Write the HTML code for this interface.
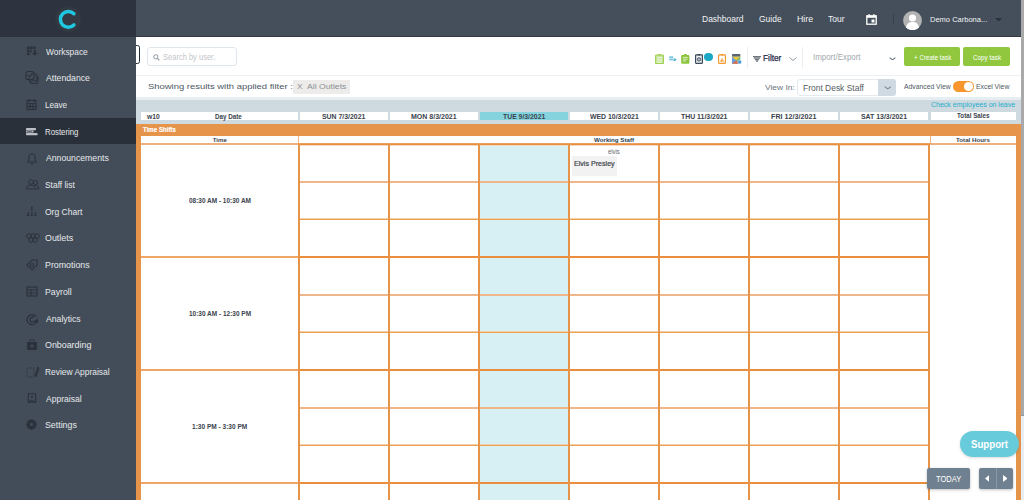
<!DOCTYPE html>
<html><head><meta charset="utf-8">
<style>
*{box-sizing:border-box;margin:0;padding:0}
html,body{width:1024px;height:500px;overflow:hidden;background:#fff;font-family:"Liberation Sans",sans-serif}
.a{position:absolute}
.t{position:absolute;white-space:nowrap;line-height:1;transform-origin:0 0}
</style></head><body>

<div class="a" style="left:128px;top:45px;width:11.6px;height:19px;border:1.7px solid #22303c;border-radius:2.5px"></div>
<div class="a" style="left:0;top:0;width:136px;height:500px;background:#434d59"></div>
<div class="a" style="left:0;top:0;width:136px;height:37px;background:#2e343f"></div>
<svg class="a" style="left:54px;top:5px" width="28" height="28" viewBox="0 0 28 28">
<circle cx="14.2" cy="14" r="13" fill="#313842"/>
<circle cx="14.2" cy="14" r="12.2" fill="#333a44"/>
<path d="M19.9 8.76 A7.9 7.9 0 1 0 19.9 19.94" fill="none" stroke="#1ec8e1" stroke-width="3.5" stroke-linecap="round"/>
</svg>
<svg class="a" style="left:26px;top:46.00px" width="14" height="13" viewBox="0 0 14 13"><g fill="#2b323c"><rect x="1" y="0.5" width="2.6" height="2.6"/><rect x="4.2" y="0.5" width="2.6" height="2.6"/><rect x="7.4" y="0.5" width="2.2" height="2.6"/><rect x="1" y="3.7" width="2.6" height="2.6"/><rect x="1" y="6.9" width="2.6" height="2.2"/><rect x="4.2" y="3.7" width="1.5" height="2.6"/><path d="M7.8 4 v3 h-2 l3 2.6 l3 -2.6 h-2 v-3z"/></g></svg>
<div class="t" style="left:45.80px;top:47px;font-size:9.42px;color:#e6e9ec;transform:scaleX(0.890);">Workspace</div>
<svg class="a" style="left:25px;top:71.48px" width="14" height="13" viewBox="0 0 14 13"><g fill="none" stroke="#2b323c" stroke-width="1.1"><path d="M1 2.5 a2 2 0 0 1 2-2 h4 a2 2 0 0 1 2 2 v4 a2 2 0 0 1 -2 2 h-4 a2 2 0 0 1 -2 -2z"/><path d="M9 3 h1 a2 2 0 0 1 2 2 v3 a2 2 0 0 1 -2 2 h-4 a2 2 0 0 1 -2 -2 v-0.5"/><path d="M11.5 5.5 a2 2 0 0 1 1.5 2 v3 a2 2 0 0 1 -2 2 h-4 a2 2 0 0 1 -2 -2 v-0.5"/><path d="M3 4 l1.6 1.8 l3.2 -4"/></g></svg>
<div class="t" style="left:45.80px;top:73px;font-size:9.42px;color:#e6e9ec;transform:scaleX(0.923);">Attendance</div>
<svg class="a" style="left:26px;top:99.36px" width="14" height="13" viewBox="0 0 14 13"><g fill="none" stroke="#2b323c" stroke-width="1.2"><rect x="1" y="1.5" width="9" height="9"/><path d="M1 4.5h9M4 4.5v6M7 4.5v6M1 7.5h9M3 0v3M8 0v3"/></g></svg>
<div class="t" style="left:45.15px;top:100px;font-size:9.42px;color:#e6e9ec;transform:scaleX(0.863);">Leave</div>
<div class="a" style="left:0;top:117.54px;width:136px;height:26.68px;background:#2a303a"></div>
<svg class="a" style="left:26px;top:126.04px" width="14" height="13" viewBox="0 0 14 13"><g fill="#bcc0c6"><rect x="0" y="1.9" width="10" height="2.3" rx="0.8"/><rect x="0" y="4.5" width="7.5" height="2.1" rx="0.5"/><rect x="0" y="6.9" width="11.6" height="2.3" rx="0.8"/></g><rect x="1" y="5.2" width="5" height="0.7" fill="#4a5058"/></svg>
<div class="t" style="left:45.17px;top:127px;font-size:9.42px;color:#e6e9ec;transform:scaleX(0.830);">Rostering</div>
<svg class="a" style="left:26px;top:152.72px" width="14" height="13" viewBox="0 0 14 13"><g fill="none" stroke="#2b323c" stroke-width="1.1"><path d="M2 9 C3 8 3 6 3 4.5 C3 2 4.5 0.8 6 0.8 C7.5 0.8 9 2 9 4.5 C9 6 9 8 10 9 Z"/><path d="M4.8 10.2 a1.3 1.3 0 0 0 2.4 0"/></g></svg>
<div class="t" style="left:45.80px;top:153px;font-size:9.42px;color:#e6e9ec;transform:scaleX(0.923);">Announcements</div>
<svg class="a" style="left:26px;top:179.40px" width="14" height="13" viewBox="0 0 14 13"><g fill="none" stroke="#2b323c" stroke-width="1"><circle cx="5" cy="3" r="2.3"/><path d="M0.8 10 c0-3 1.5-4 4.2-4 s4.2 1 4.2 4 z"/><circle cx="9.5" cy="3.5" r="2"/><path d="M9 6.3 c2.5 0 3.8 1 3.8 3.7 h-3"/></g></svg>
<div class="t" style="left:45.46px;top:180px;font-size:9.42px;color:#e6e9ec;transform:scaleX(0.895);">Staff list</div>
<svg class="a" style="left:26px;top:206.08px" width="14" height="13" viewBox="0 0 14 13"><g fill="#2b323c"><circle cx="5.8" cy="1.4" r="0.9"/><path d="M4.5 4.0 q0 -1.8 1.3 -1.8 q1.3 0 1.3 1.8z"/><circle cx="2" cy="7.4" r="0.9"/><path d="M0.7 10.0 q0 -1.8 1.3 -1.8 q1.3 0 1.3 1.8z"/><circle cx="5.8" cy="7.4" r="0.9"/><path d="M4.5 10.0 q0 -1.8 1.3 -1.8 q1.3 0 1.3 1.8z"/><circle cx="9.4" cy="7.4" r="0.9"/><path d="M8.1 10.0 q0 -1.8 1.3 -1.8 q1.3 0 1.3 1.8z"/></g><path d="M2 5.6 h7.4 M5.8 4.2 v1.4" stroke="#2b323c" stroke-width="0.5" opacity="0.5"/></svg>
<div class="t" style="left:45.46px;top:207px;font-size:9.42px;color:#e6e9ec;transform:scaleX(0.905);">Org Chart</div>
<svg class="a" style="left:26px;top:232.76px" width="14" height="13" viewBox="0 0 14 13"><g fill="none" stroke="#2b323c" stroke-width="1"><circle cx="3" cy="3" r="2.3"/><circle cx="7" cy="3" r="2.3"/><circle cx="11" cy="3" r="2.3"/><circle cx="5" cy="7" r="2.3"/><circle cx="9" cy="7" r="2.3"/></g></svg>
<div class="t" style="left:45.44px;top:233px;font-size:9.42px;color:#e6e9ec;transform:scaleX(0.946);">Outlets</div>
<svg class="a" style="left:26px;top:259.44px" width="14" height="13" viewBox="0 0 14 13"><g fill="none" stroke="#2b323c" stroke-width="1.1"><path d="M1 6 L6 1 L11 1 L11 6 L6 11 Z"/><circle cx="6" cy="6" r="1.5"/></g></svg>
<div class="t" style="left:45.09px;top:260px;font-size:9.42px;color:#e6e9ec;transform:scaleX(0.938);">Promotions</div>
<svg class="a" style="left:26px;top:286.12px" width="14" height="13" viewBox="0 0 14 13"><g fill="none" stroke="#2b323c" stroke-width="1.1"><rect x="1" y="1" width="10" height="9"/><path d="M1 4h10M1 7h10M5 4v6"/></g></svg>
<div class="t" style="left:45.10px;top:287px;font-size:9.42px;color:#e6e9ec;transform:scaleX(0.929);">Payroll</div>
<svg class="a" style="left:26px;top:312.80px" width="14" height="13" viewBox="0 0 14 13"><g fill="none" stroke="#2b323c" stroke-width="1.3"><path d="M10 3.5 A5 5 0 1 0 11 7.5"/><path d="M8 4.5 A2.5 2.5 0 1 0 9 7"/></g><path d="M8 9 L12 5 L12 10 Z" fill="#2b323c"/></svg>
<div class="t" style="left:45.80px;top:314px;font-size:9.42px;color:#e6e9ec;transform:scaleX(0.922);">Analytics</div>
<svg class="a" style="left:26px;top:339.48px" width="14" height="13" viewBox="0 0 14 13"><g fill="#2b323c"><rect x="1" y="3" width="10" height="8" rx="1"/><rect x="4" y="1" width="4" height="2.5" fill="none" stroke="#2b323c"/></g><path d="M6 5 v4M4 7h4" stroke="#434d59" stroke-width="1"/></svg>
<div class="t" style="left:45.45px;top:340px;font-size:9.42px;color:#e6e9ec;transform:scaleX(0.942);">Onboarding</div>
<svg class="a" style="left:26px;top:366.16px" width="14" height="13" viewBox="0 0 14 13"><g fill="none" stroke="#2b323c" stroke-width="1"><rect x="1" y="2" width="7" height="9" stroke-dasharray="1 1"/><path d="M9 10 L12 1 L13 2 L10 11 Z" fill="#2b323c"/></g></svg>
<div class="t" style="left:45.13px;top:367px;font-size:9.42px;color:#e6e9ec;transform:scaleX(0.894);">Review Appraisal</div>
<svg class="a" style="left:26px;top:392.84px" width="14" height="13" viewBox="0 0 14 13"><g fill="none" stroke="#2b323c" stroke-width="1.1"><path d="M2.3 0.8 h7.4 v8.4 h-7.4 z"/><path d="M2.3 9.8 l3 -2.6 l4.4 2" /></g><circle cx="6" cy="3.8" r="1.1" fill="#2b323c"/></svg>
<div class="t" style="left:45.80px;top:394px;font-size:9.42px;color:#e6e9ec;transform:scaleX(0.910);">Appraisal</div>
<svg class="a" style="left:26px;top:418.62px" width="14" height="13" viewBox="0 0 14 13"><path d="M10.67 4.34 L10.67 6.66 L9.01 7.20 L9.18 6.78 L9.98 8.34 L8.34 9.98 L6.78 9.18 L7.20 9.01 L6.66 10.67 L4.34 10.67 L3.80 9.01 L4.22 9.18 L2.66 9.98 L1.02 8.34 L1.82 6.78 L1.99 7.20 L0.33 6.66 L0.33 4.34 L1.99 3.80 L1.82 4.22 L1.02 2.66 L2.66 1.02 L4.22 1.82 L3.80 1.99 L4.34 0.33 L6.66 0.33 L7.20 1.99 L6.78 1.82 L8.34 1.02 L9.98 2.66 L9.18 4.22 L9.01 3.80Z" fill="#2b323c"/><circle cx="5.5" cy="5.5" r="1.4" fill="#434d59"/></svg>
<div class="t" style="left:45.45px;top:420px;font-size:9.42px;color:#e6e9ec;transform:scaleX(0.935);">Settings</div>
<div class="a" style="left:136px;top:0;width:885px;height:37px;background:#444f5b"></div>
<div class="a" style="left:136px;top:35.8px;width:885px;height:1.2px;background:#343b45"></div>
<div class="t" style="left:701.92px;top:15px;font-size:8.84px;color:#f2f3f4;transform:scaleX(0.961);">Dashboard</div>
<div class="t" style="left:758.68px;top:15px;font-size:8.84px;color:#f2f3f4;transform:scaleX(0.959);">Guide</div>
<div class="t" style="left:796.80px;top:15px;font-size:8.84px;color:#f2f3f4;transform:scaleX(0.995);">Hire</div>
<div class="t" style="left:828.43px;top:15px;font-size:8.84px;color:#f2f3f4;transform:scaleX(0.958);">Tour</div>
<svg class="a" style="left:866px;top:14px" width="11" height="11" viewBox="0 0 11 11"><rect x="0.8" y="1.8" width="9.4" height="8.4" fill="none" stroke="#fff" stroke-width="1.3"/><rect x="0.8" y="1.8" width="9.4" height="2" fill="#fff"/><rect x="5.5" y="5.5" width="3" height="3" fill="#fff"/><rect x="2.5" y="0" width="1.2" height="2.5" fill="#fff"/><rect x="7.3" y="0" width="1.2" height="2.5" fill="#fff"/></svg>
<div class="a" style="left:893px;top:14.4px;width:1px;height:10px;background:#38404a"></div>
<svg class="a" style="left:903.2px;top:10.5px" width="19" height="19" viewBox="0 0 19 19"><circle cx="9.5" cy="9.5" r="9.4" fill="#b3b3b3"/><circle cx="9.5" cy="7" r="3.6" fill="#fff"/><path d="M3 16.5 C4 12 6.5 11 9.5 11 C12.5 11 15 12 16 16.5 C14 18.4 12 19 9.5 19 C7 19 5 18.4 3 16.5Z" fill="#fff"/></svg>
<div class="t" style="left:930.00px;top:16px;font-size:7.39px;color:#f2f3f4;transform:scaleX(1.019);">Demo Carbona...</div>
<svg class="a" style="left:994.9px;top:18.2px" width="7.4" height="3.5" viewBox="0 0 7.4 3.5"><path d="M0 0h7.4l-3.7 3.5z" fill="#2c323b"/></svg>
<div class="a" style="left:1021px;top:0;width:3px;height:415px;background:#a9a9a9"></div>
<div class="a" style="left:1021px;top:415px;width:3px;height:85px;background:#e9eef2"></div>
<div class="a" style="left:1021px;top:415px;width:3px;height:1px;background:#8a98a6"></div>
<div class="a" style="left:146.5px;top:47.1px;width:90.8px;height:18.9px;border:1px solid #dfe6eb;border-radius:3px"></div>
<svg class="a" style="left:153px;top:54px" width="7" height="7" viewBox="0 0 7 7"><circle cx="2.8" cy="2.8" r="2.1" fill="none" stroke="#8a949d" stroke-width="0.95"/><path d="M4.3 4.3 L6.4 6.4" stroke="#8a949d" stroke-width="1.1"/></svg>
<div class="t" style="left:163.10px;top:53px;font-size:8.84px;color:#c2c6ca;transform:scaleX(0.852);">Search by user.</div>
<div class="a" style="left:136px;top:75px;width:885px;height:1px;background:#eef1f4"></div>
<svg class="a" style="left:654.5px;top:54px" width="9" height="10" viewBox="0 0 9 10"><rect x="0.6" y="1" width="7.8" height="8.6" rx="0.6" fill="#c9e69e" stroke="#9fd14f" stroke-width="1.1"/><rect x="3.2" y="0" width="2.6" height="1.6" fill="#9fd14f"/><path d="M2 3.3h5M2 5.1h5M2 6.9h5M2 8.5h5" stroke="#f2f9e8" stroke-width="0.7"/></svg>
<svg class="a" style="left:668.5px;top:55.8px" width="8" height="6" viewBox="0 0 8 6"><rect x="0.2" y="0.3" width="4" height="1.8" fill="#7cc7e0"/><rect x="0.2" y="2.6" width="4" height="1.8" fill="#7cc7e0"/><path d="M4.6 2.6h1.5l1.6 1.2-1.6 1.3h-1.5z" fill="#4fb4d6"/></svg>
<svg class="a" style="left:681.2px;top:54px" width="9" height="10" viewBox="0 0 9 10"><rect x="0.2" y="0.9" width="8.2" height="8.8" rx="1" fill="#8cc63f"/><rect x="3" y="0" width="2.6" height="1.6" fill="#8cc63f"/><path d="M2 3.4h4.6M2 5.2h4.6M2 7h3" stroke="#e3f1cf" stroke-width="0.9"/></svg>
<svg class="a" style="left:695px;top:54.4px" width="8" height="10" viewBox="0 0 8 10"><rect x="0.6" y="0.9" width="6.8" height="8.4" rx="0.5" fill="#eef0f2" stroke="#3b4b5b" stroke-width="1.2"/><rect x="2.7" y="0" width="2.6" height="1.5" fill="#3b4b5b"/><circle cx="4" cy="5.4" r="1.7" fill="#b9c0c7" stroke="#3b4b5b" stroke-width="0.9"/></svg>
<div class="a" style="left:704.4px;top:52.9px;width:8.3px;height:8px;border-radius:50%;background:#1ba8c4"></div>
<svg class="a" style="left:717.9px;top:54.4px" width="8" height="10" viewBox="0 0 8 10"><rect x="0.6" y="0.9" width="6.8" height="8.4" rx="0.5" fill="#fff" stroke="#f39a30" stroke-width="1.2"/><rect x="2.7" y="0" width="2.6" height="1.5" fill="#f39a30"/><path d="M4 3.5 L6 7.8 H2 Z" fill="#f39a30"/><path d="M4 3.5 v4.3" stroke="#fff" stroke-width="0.4"/></svg>
<svg class="a" style="left:731.9px;top:53.7px" width="10" height="10" viewBox="0 0 10 10"><rect x="0" y="0" width="8.3" height="2.8" rx="0.4" fill="#5d6670"/><rect x="0" y="2.8" width="8.3" height="7" fill="#6bb36b"/><path d="M0 2.8 L4.2 6.5 L0 9.8z" fill="#6a9ce0"/><path d="M0 2.8 H8.3 L4.2 6.5z" fill="#e8c64a"/><path d="M0 9.8 L4.2 6.5 L8.3 9.8z" fill="#e06a5a"/><circle cx="7.7" cy="8" r="1.9" fill="#3d96dd" stroke="#fff" stroke-width="0.5"/></svg>
<div class="a" style="left:747.2px;top:47px;width:1px;height:21px;background:#eceff2"></div>
<svg class="a" style="left:752.9px;top:55.6px" width="8" height="6" viewBox="0 0 8 6"><path d="M0 0.6h8M0.9 2.1h6.2M1.9 3.6h4.2M2.9 5.1h2.2" stroke="#70787f" stroke-width="1.1"/></svg>
<div class="t" style="left:763.14px;top:54px;font-size:8.55px;color:#1f2a44;transform:scaleX(0.967);-webkit-text-stroke:0.25px #1f2a44;">Filter</div>
<svg class="a" style="left:789px;top:56.8px" width="8" height="4" viewBox="0 0 8 4"><path d="M0.5 0.5 L4 3.5 L7.5 0.5" fill="none" stroke="#8e99a4" stroke-width="1"/></svg>
<div class="a" style="left:802.2px;top:47px;width:1px;height:21px;background:#eceff2"></div>
<div class="t" style="left:813.19px;top:53px;font-size:8.55px;color:#a3a9ae;transform:scaleX(0.927);">Import/Export</div>
<svg class="a" style="left:888.5px;top:56.8px" width="7" height="3.5" viewBox="0 0 7 3.5"><path d="M0.6 0.6 L3.5 2.9 L6.4 0.6" fill="none" stroke="#6c7a88" stroke-width="1.2"/></svg>
<div class="a" style="left:903.9px;top:47.3px;width:56.6px;height:18.6px;background:#90c73f;border-radius:2px"></div>
<div class="t" style="left:913.65px;top:55px;font-size:6.96px;color:#fff;transform:scaleX(0.897);">+ Create task</div>
<div class="a" style="left:963.1px;top:47.3px;width:46.9px;height:18.6px;background:#90c73f;border-radius:2px"></div>
<div class="t" style="left:972.58px;top:55px;font-size:6.96px;color:#fff;transform:scaleX(0.910);">Copy task</div>
<div class="t" style="left:147.52px;top:83px;font-size:8.12px;color:#4d5863;transform:scaleX(1.164);">Showing results with applied filter :</div>
<div class="a" style="left:293.3px;top:79.6px;width:56.9px;height:14.1px;background:#eeecea"></div>
<div class="t" style="left:297.23px;top:83px;font-size:7.97px;color:#8a9096;transform:scaleX(1.055);">X</div>
<div class="t" style="left:307.00px;top:83px;font-size:7.97px;color:#8a9096;transform:scaleX(1.084);">All Outlets</div>
<div class="t" style="left:764.90px;top:84px;font-size:8.12px;color:#6b7580;transform:scaleX(1.039);">View In:</div>
<div class="a" style="left:797.3px;top:78.6px;width:98.9px;height:17.9px;background:#fff;border:1px solid #e6eaee;border-radius:3px"></div>
<div class="a" style="left:877.6px;top:78.6px;width:18.6px;height:17.9px;background:#d0dae2;border-radius:0 3px 3px 0"></div>
<svg class="a" style="left:883.5px;top:86.3px" width="7.5" height="3.5" viewBox="0 0 7.5 3.5"><path d="M0.6 0.6 L3.75 2.9 L6.9 0.6" fill="none" stroke="#7a8794" stroke-width="1.1"/></svg>
<div class="t" style="left:803.32px;top:84px;font-size:8.99px;color:#555c63;transform:scaleX(0.941);">Front Desk Staff</div>
<div class="t" style="left:903.80px;top:84px;font-size:6.81px;color:#4d5863;transform:scaleX(0.998);">Advanced View</div>
<div class="a" style="left:952.8px;top:81.3px;width:21.3px;height:10.9px;background:#f7962f;border-radius:6px"></div>
<div class="a" style="left:963.6px;top:82.1px;width:9.6px;height:9.3px;background:#fff;border-radius:50%"></div>
<div class="t" style="left:975.85px;top:84px;font-size:6.81px;color:#4d5863;transform:scaleX(1.006);">Excel View</div>
<div class="a" style="left:136px;top:96.5px;width:885px;height:3.3px;background:#e7eef2"></div>
<div class="a" style="left:136px;top:99.5px;width:885px;height:24.5px;background:#cfd9e0"></div>
<div class="t" style="left:931.35px;top:101px;font-size:7.39px;color:#22afcb;transform:scaleX(0.950);">Check employees on leave</div>
<div class="a" style="left:141.3px;top:112px;width:156.7px;height:8px;background:#fff"></div>
<div class="t" style="left:146.77px;top:114px;font-size:6.43px;color:#3a434d;font-weight:bold;transform:scaleX(1.052);">w10</div>
<div class="t" style="left:214.82px;top:114px;font-size:6.86px;color:#3a434d;font-weight:bold;transform:scaleX(0.915);">Day Date</div>
<div class="a" style="left:300px;top:112px;width:88px;height:8px;background:#fff"></div>
<div class="t" style="left:322.36px;top:114px;font-size:6.86px;color:#3a434d;font-weight:bold;transform:scaleX(1.006);">SUN 7/3/2021</div>
<div class="a" style="left:390px;top:112px;width:88px;height:8px;background:#fff"></div>
<div class="t" style="left:411.08px;top:114px;font-size:6.86px;color:#3a434d;font-weight:bold;transform:scaleX(1.023);">MON 8/3/2021</div>
<div class="a" style="left:480px;top:112px;width:88px;height:8px;background:#85d3dd"></div>
<div class="t" style="left:502.93px;top:114px;font-size:6.86px;color:#3a434d;font-weight:bold;transform:scaleX(0.998);">TUE 9/3/2021</div>
<div class="a" style="left:570px;top:112px;width:88px;height:8px;background:#fff"></div>
<div class="t" style="left:589.75px;top:114px;font-size:6.86px;color:#3a434d;font-weight:bold;transform:scaleX(1.006);">WED 10/3/2021</div>
<div class="a" style="left:660px;top:112px;width:88px;height:8px;background:#fff"></div>
<div class="t" style="left:680.83px;top:114px;font-size:6.86px;color:#3a434d;font-weight:bold;transform:scaleX(1.007);">THU 11/3/2021</div>
<div class="a" style="left:750px;top:112px;width:88px;height:8px;background:#fff"></div>
<div class="t" style="left:771.17px;top:114px;font-size:6.86px;color:#3a434d;font-weight:bold;transform:scaleX(1.045);">FRI 12/3/2021</div>
<div class="a" style="left:840px;top:112px;width:88px;height:8px;background:#fff"></div>
<div class="t" style="left:861.01px;top:114px;font-size:6.86px;color:#3a434d;font-weight:bold;transform:scaleX(1.009);">SAT 13/3/2021</div>
<div class="a" style="left:931px;top:112px;width:84.7px;height:8px;background:#fff"></div>
<div class="t" style="left:957.24px;top:113px;font-size:6.71px;color:#3a434d;font-weight:bold;transform:scaleX(0.930);">Total Sales</div>
<div class="a" style="left:136px;top:123.6px;width:885px;height:377px;background:#e7944b"></div>
<div class="t" style="left:142.64px;top:127px;font-size:6.57px;color:#fff;font-weight:bold;transform:scaleX(0.934);-webkit-text-stroke:0.15px #fff;">Time Shifts</div>
<div class="a" style="left:141px;top:135.5px;width:875px;height:8px;background:#fff"></div>
<div class="a" style="left:298px;top:135.5px;width:1px;height:8px;background:#f0b47e"></div>
<div class="a" style="left:930px;top:135.5px;width:1px;height:8px;background:#f0b47e"></div>
<div class="t" style="left:212.74px;top:137px;font-size:6.14px;color:#3a434d;font-weight:bold;transform:scaleX(1.000);">Time</div>
<div class="t" style="left:594.00px;top:137px;font-size:6.14px;color:#2c3e50;font-weight:bold;transform:scaleX(1.009);">Working Staff</div>
<div class="t" style="left:956.14px;top:137px;font-size:6.14px;color:#3a434d;font-weight:bold;transform:scaleX(1.012);">Total Hours</div>
<div class="a" style="left:141px;top:145px;width:875px;height:360px;background:#fff"></div>
<div class="a" style="left:141px;top:256px;width:157px;height:1.5px;background:#eea565"></div>
<div class="a" style="left:141px;top:369px;width:157px;height:1.5px;background:#eea565"></div>
<div class="a" style="left:141px;top:482px;width:157px;height:1.5px;background:#eea565"></div>
<div class="t" style="left:188.56px;top:198px;font-size:6.71px;color:#3a434d;font-weight:bold;transform:scaleX(0.963);">08:30 AM - 10:30 AM</div>
<div class="t" style="left:188.81px;top:311px;font-size:6.29px;color:#3a434d;font-weight:bold;transform:scaleX(1.031);">10:30 AM - 12:30 PM</div>
<div class="t" style="left:192.11px;top:424px;font-size:6.29px;color:#3a434d;font-weight:bold;transform:scaleX(1.042);">1:30 PM - 3:30 PM</div>
<div class="a" style="left:480px;top:145px;width:88px;height:360px;background:#d7f0f4"></div>
<div class="a" style="left:298px;top:181px;width:632px;height:2px;background:#efb68a"></div>
<div class="a" style="left:298px;top:218px;width:632px;height:1px;background:#f4cfac"></div>
<div class="a" style="left:298px;top:219px;width:632px;height:1px;background:#eba050"></div>
<div class="a" style="left:298px;top:294px;width:632px;height:2px;background:#efb68a"></div>
<div class="a" style="left:298px;top:331px;width:632px;height:1px;background:#f4cfac"></div>
<div class="a" style="left:298px;top:332px;width:632px;height:1px;background:#eba050"></div>
<div class="a" style="left:298px;top:407px;width:632px;height:2px;background:#efb68a"></div>
<div class="a" style="left:298px;top:444px;width:632px;height:1px;background:#f4cfac"></div>
<div class="a" style="left:298px;top:445px;width:632px;height:1px;background:#eba050"></div>
<div class="a" style="left:298px;top:143px;width:632px;height:1px;background:#eba060"></div>
<div class="a" style="left:298px;top:144px;width:632px;height:1px;background:#e88e3c"></div>
<div class="a" style="left:298px;top:145px;width:632px;height:1px;background:#f6dcc6"></div>
<div class="a" style="left:298px;top:256px;width:632px;height:2px;background:#e88e3c"></div>
<div class="a" style="left:298px;top:369px;width:632px;height:2px;background:#e88e3c"></div>
<div class="a" style="left:298px;top:482px;width:632px;height:2px;background:#e88e3c"></div>
<div class="a" style="left:141px;top:143px;width:157px;height:2px;background:#efb080"></div>
<div class="a" style="left:930px;top:143px;width:86px;height:2px;background:#efb080"></div>
<div class="a" style="left:298px;top:143.5px;width:2px;height:360px;background:#e7944b"></div>
<div class="a" style="left:388px;top:143.5px;width:2px;height:360px;background:#e7944b"></div>
<div class="a" style="left:478px;top:143.5px;width:2px;height:360px;background:#e7944b"></div>
<div class="a" style="left:568px;top:143.5px;width:2px;height:360px;background:#e7944b"></div>
<div class="a" style="left:658px;top:143.5px;width:2px;height:360px;background:#e7944b"></div>
<div class="a" style="left:748px;top:143.5px;width:2px;height:360px;background:#e7944b"></div>
<div class="a" style="left:838px;top:143.5px;width:2px;height:360px;background:#e7944b"></div>
<div class="a" style="left:928px;top:143.5px;width:2px;height:360px;background:#e7944b"></div>
<div class="t" style="left:608.47px;top:148px;font-size:7.25px;color:#606469;transform:scaleX(0.808);">elvis</div>
<div class="a" style="left:572.1px;top:155.5px;width:45px;height:20.2px;background:#f2f2f2"></div>
<div class="t" style="left:574.03px;top:161px;font-size:6.96px;color:#3f444a;transform:scaleX(1.021);-webkit-text-stroke:0.2px #3f444a;">Elvis Presley</div>
<div class="a" style="left:960.2px;top:430.8px;width:58.9px;height:26.6px;background:#68cbdb;border-radius:14px;box-shadow:0 1px 3px rgba(0,0,0,.15)"></div>
<div class="t" style="left:971.21px;top:439px;font-size:11.00px;color:#fff;font-weight:bold;transform:scaleX(0.878);">Support</div>
<div class="a" style="left:926.9px;top:468px;width:42.7px;height:20.8px;background:#6f8090;border-radius:2px;box-shadow:0 1px 3px rgba(0,0,0,.25)"></div>
<div class="t" style="left:935.75px;top:475px;font-size:8.70px;color:#fff;transform:scaleX(0.867);">TODAY</div>
<div class="a" style="left:979px;top:468px;width:34.1px;height:20.8px;background:#6f8090;border-radius:2px;box-shadow:0 1px 3px rgba(0,0,0,.25)"></div>
<div class="a" style="left:995.5px;top:468px;width:1px;height:20.8px;background:#8a98a5"></div>
<svg class="a" style="left:984.9px;top:475.4px" width="4.4" height="7" viewBox="0 0 4.4 7"><path d="M4.4 0 V7 L0 3.5z" fill="#fff"/></svg>
<svg class="a" style="left:1002.5px;top:475.4px" width="4.5" height="7" viewBox="0 0 4.5 7"><path d="M0 0 V7 L4.5 3.5z" fill="#fff"/></svg>
</body></html>
